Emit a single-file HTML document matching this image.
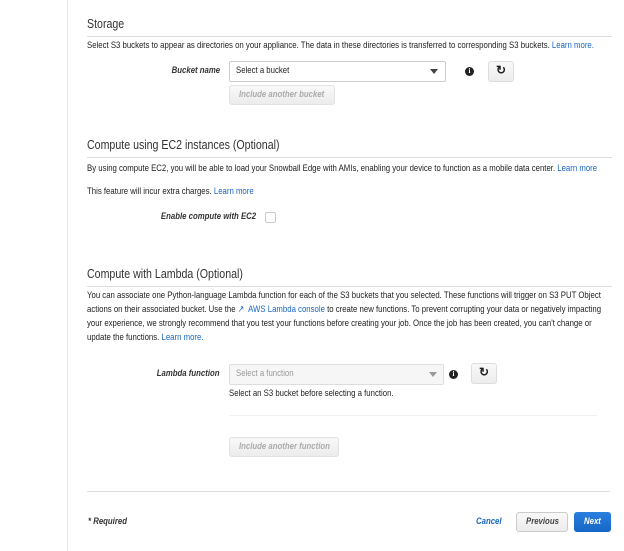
<!DOCTYPE html>
<html><head><style>
body{margin:0;width:624px;height:551px;background:#fff;position:relative;overflow:hidden;font-family:"Liberation Sans",sans-serif;color:#222}
.a{position:absolute;white-space:nowrap;transform-origin:0 50%;transform:scaleX(.82);font-size:9.5px;line-height:12px}
.h{font-size:12.5px;color:#333;transform:scaleX(.85)}
.r{transform-origin:100% 50%}
.b{font-weight:bold;font-style:italic;color:#333}
a,.l{color:#1a66c2;text-decoration:none}
.hr{position:absolute;height:1px;background:#ddd}
.box{position:absolute;border:1px solid #ccc;border-radius:2px;box-sizing:border-box;background:#fff}
.btn{position:absolute;border:1px solid #ddd;border-radius:3px;box-sizing:border-box;background:linear-gradient(#f9f9f9,#ececec)}
.caret{position:absolute;width:0;height:0;border-left:4px solid transparent;border-right:4px solid transparent;border-top:5px solid #444}
.info{position:absolute;width:9px;height:9px;border-radius:50%;background:#222;color:#fff;font:bold 7px/9px "Liberation Serif",serif;text-align:center}
</style></head><body>
<div style="position:absolute;left:67px;top:0;width:1px;height:551px;background:#e6e6e6"></div>

<div class="a h" style="left:87px;top:18px">Storage</div>
<div class="hr" style="left:87px;top:36px;width:525px"></div>
<div class="a" style="left:87px;top:40px">Select S3 buckets to appear as directories on your appliance. The data in these directories is transferred to corresponding S3 buckets. <span class="l">Learn more.</span></div>
<div class="a b r" style="right:404px;top:65px">Bucket name</div>
<div class="box" style="left:229px;top:61px;width:217px;height:21px"></div>
<div class="a" style="left:236px;top:65px">Select a bucket</div>
<div class="caret" style="left:430px;top:69px"></div>
<div class="info" style="left:465px;top:67px">i</div>
<div class="btn" style="left:488px;top:61px;width:26px;height:21px"></div>
<div class="a" style="left:496px;top:64px;font-size:12px;font-weight:bold;transform:none">&#x21bb;</div>
<div class="btn" style="left:229px;top:85px;width:106px;height:20px;border-color:#e2e2e2"></div>
<div class="a b" style="left:239px;top:89px;color:#aaa">Include another bucket</div>

<div class="a h" style="left:87px;top:139px">Compute using EC2 instances (Optional)</div>
<div class="hr" style="left:87px;top:157px;width:525px"></div>
<div class="a" style="left:87px;top:163px">By using compute EC2, you will be able to load your Snowball Edge with AMIs, enabling your device to function as a mobile data center. <span class="l">Learn more</span></div>
<div class="a" style="left:87px;top:186px">This feature will incur extra charges. <span class="l">Learn more</span></div>
<div class="a b r" style="right:368px;top:211px">Enable compute with EC2</div>
<div class="box" style="left:265px;top:212px;width:11px;height:11px;border-radius:2px"></div>

<div class="a h" style="left:87px;top:268px">Compute with Lambda (Optional)</div>
<div class="hr" style="left:87px;top:286px;width:525px"></div>
<div class="a" style="left:87px;top:290px">You can associate one Python-language Lambda function for each of the S3 buckets that you selected. These functions will trigger on S3 PUT Object</div>
<div class="a" style="left:87px;top:304px">actions on their associated bucket. Use the <span class="l">&#x2197;&nbsp; AWS Lambda console</span> to create new functions. To prevent corrupting your data or negatively impacting</div>
<div class="a" style="left:87px;top:318px">your experience, we strongly recommend that you test your functions before creating your job. Once the job has been created, you can't change or</div>
<div class="a" style="left:87px;top:332px">update the functions. <span class="l">Learn more.</span></div>
<div class="a b r" style="right:404px;top:368px">Lambda function</div>
<div class="box" style="left:229px;top:364px;width:215px;height:21px;background:#f6f6f6;border-color:#ddd"></div>
<div class="a" style="left:236px;top:368px;color:#999">Select a function</div>
<div class="caret" style="left:429px;top:372px;border-top-color:#999"></div>
<div class="info" style="left:449px;top:370px">i</div>
<div class="btn" style="left:471px;top:363px;width:26px;height:21px"></div>
<div class="a" style="left:479px;top:366px;font-size:12px;font-weight:bold;transform:none">&#x21bb;</div>
<div class="a" style="left:229px;top:388px">Select an S3 bucket before selecting a function.</div>
<div class="hr" style="left:229px;top:415px;width:368px;background:#f0f0f0"></div>
<div class="btn" style="left:229px;top:437px;width:110px;height:20px;border-color:#e2e2e2"></div>
<div class="a b" style="left:239px;top:441px;color:#aaa">Include another function</div>

<div class="hr" style="left:87px;top:491px;width:523px"></div>
<div class="a b" style="left:88px;top:516px">* Required</div>
<div class="a b l" style="left:476px;top:516px;color:#1a66c2">Cancel</div>
<div class="btn" style="left:516px;top:512px;width:52px;height:20px;border-color:#ccc"></div>
<div class="a b" style="left:526px;top:516px;color:#444">Previous</div>
<div style="position:absolute;left:574px;top:512px;width:37px;height:20px;border-radius:3px;background:linear-gradient(#2b7fde,#1566c6)"></div>
<div class="a b" style="left:584px;top:516px;color:#fff">Next</div>
</body></html>
